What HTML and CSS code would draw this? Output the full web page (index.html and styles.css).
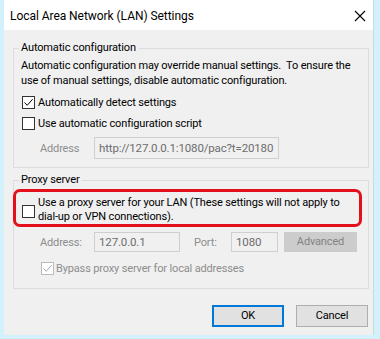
FILE: index.html
```html
<!DOCTYPE html>
<html>
<head>
<meta charset="utf-8">
<link rel="stylesheet" href="styles.css">
</head>
<body>
<div class="window">
  <div class="titlebar">
    <span class="title">Local Area Network (LAN) Settings</span>
    <svg class="close" width="12" height="12" viewBox="0 0 12 12"><path d="M1 1 L11 11 M11 1 L1 11" stroke="#000" stroke-width="1.1" fill="none"/></svg>
  </div>
  <div class="content">
    <fieldset class="group group-auto">
      <legend>Automatic configuration</legend>
      <p class="desc">Automatic configuration may override manual settings.&nbsp; To ensure the<br>use of manual settings, disable automatic configuration.</p>
      <label class="row row-first"><span class="cb checked"><svg width="11" height="11" viewBox="0 0 11 11"><path d="M1.5 5.5 L4.2 8.3 L9.6 2.2" stroke="#000" stroke-width="1" fill="none"/></svg></span>Automatically detect settings</label>
      <label class="row"><span class="cb"></span>Use automatic configuration script</label>
      <div class="addr-row">
        <span class="dis-label addr-label">Address</span>
        <span class="input input-wide">http://127.0.0.1:1080/pac?t=20180</span>
      </div>
    </fieldset>

    <fieldset class="group group-proxy">
      <legend>Proxy server</legend>
      <div class="highlight">
        <span class="cb cb-top"></span>
        <span class="hl-text">Use a proxy server for your LAN (These settings will not apply to<br>dial-up or VPN connections).</span>
      </div>
      <div class="addr-row addr-row-proxy">
        <span class="dis-label addr-label">Address:</span>
        <span class="input input-addr">127.0.0.1</span>
        <span class="dis-label port-label">Port:</span>
        <span class="input input-port">1080</span>
        <span class="btn-adv">Advanced</span>
      </div>
      <label class="row row-bypass dis-label"><span class="cb cb-dis"><svg width="11" height="11" viewBox="0 0 11 11"><path d="M1.5 5.5 L4.2 8.3 L9.6 2.2" stroke="#a8a8a8" stroke-width="1" fill="none"/></svg></span>Bypass proxy server for local addresses</label>
    </fieldset>

    <div class="buttons">
      <span class="btn btn-ok">OK</span>
      <span class="btn">Cancel</span>
    </div>
  </div>
</div>
</body>
</html>
```
FILE: styles.css
```css
html, body {
  margin: 0;
  padding: 0;
  background: #d3f1fa;
}
body {
  width: 380px;
  height: 339px;
  overflow: hidden;
  font-family: Roboto, "Noto Sans", sans-serif;
  font-size: 11px;
  letter-spacing: -0.15px;
  color: #000;
}
.window {
  margin: 0 6px 0 4px;
  width: 369px;
  height: 335px;
  background: #f0f0f0;
  border-right: 1px solid #c4dce4;
  display: flex;
  flex-direction: column;
}
.titlebar {
  height: 30px;
  background: #fff;
  display: flex;
  align-items: center;
  justify-content: space-between;
  padding: 0 7px 0 6px;
}
.title {
  font-size: 12px;
  letter-spacing: -0.05px;
  line-height: 16px;
  padding-top: 2px;
}
.close {
  display: block;
  margin-top: 2px;
}
.content {
  padding: 10px 4px 0 9px;
  display: flex;
  flex-direction: column;
}
.group {
  margin: 0;
  padding: 3px 8px 8px 7px;
  border: 1px solid #dcdcdc;
  min-width: 0;
}
.group legend {
  padding: 0 3px 0 2px;
  margin-left: -2px;
  line-height: 16px;
}
.desc {
  margin: 0;
  line-height: 14.5px;
  white-space: nowrap;
}
.row {
  display: flex;
  align-items: center;
  height: 16px;
  margin-top: 5px;
}
.row-first {
  margin-top: 6px;
}
.cb {
  width: 11px;
  height: 11px;
  border: 1px solid #333;
  background: #fff;
  margin: 0 3px 0 1px;
  flex: none;
  display: flex;
}
.cb-dis {
  border-color: #bcbcbc;
  background: #fff;
}
.addr-row {
  display: flex;
  align-items: center;
  margin-top: 6px;
}
.dis-label {
  color: #8d8d8d;
}
.addr-label {
  width: 54px;
  padding-left: 19px;
  flex: none;
}
.input {
  box-sizing: border-box;
  border: 1px solid #cfcfcf;
  background: #f0f0f0;
  color: #6d6d6d;
  height: 22px;
  line-height: 20px;
  padding: 0 4px;
  white-space: nowrap;
  overflow: hidden;
  font-size: 11.5px;
}
.input-wide {
  width: 185px;
}
.group-proxy {
  margin-top: 4px;
  padding-top: 1px;
  padding-bottom: 12px;
}
.highlight {
  display: flex;
  align-items: center;
  margin-left: -8px;
  margin-right: -2px;
  border: 3px solid #e3101c;
  border-radius: 7px;
  padding: 4px 4px 0 5px;
}
.hl-text {
  line-height: 14px;
  white-space: nowrap;
}
.cb-top {
  margin-top: 3px;
}
.addr-row-proxy {
  margin-top: 5px;
}
.input-addr {
  width: 86px;
  height: 20px;
  line-height: 18px;
}
.port-label {
  margin-left: 14px;
  width: 37px;
}
.input-port {
  width: 47px;
  height: 20px;
  line-height: 18px;
  color: #6d6d6d;
}
.btn-adv {
  margin-left: 6px;
  width: 73px;
  height: 20px;
  line-height: 20px;
  background: #cccccc;
  color: #838383;
  text-align: center;
}
.row-bypass {
  margin-top: 8px;
  padding-left: 19px;
}
.row-bypass .cb {
  margin-right: 2px;
}
.buttons {
  display: flex;
  justify-content: flex-end;
  gap: 12px;
  margin-top: 16px;
  padding-right: 1px;
}
.btn {
  box-sizing: border-box;
  width: 72px;
  height: 22px;
  border: 1px solid #adadad;
  background: #e1e1e1;
  text-align: center;
  line-height: 20px;
}
.btn-ok {
  border: 2px solid #0078d7;
  line-height: 18px;
}
```
